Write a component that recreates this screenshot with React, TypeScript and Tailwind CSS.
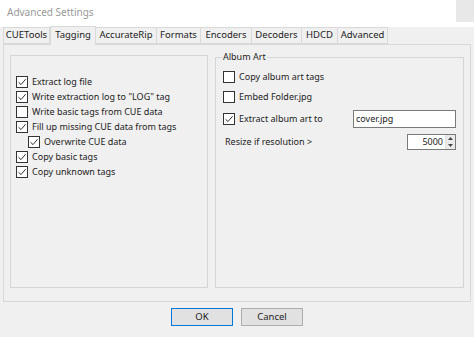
import { ReactNode } from 'react';

const tabs = ['CUETools', 'Tagging', 'AccurateRip', 'Formats', 'Encoders', 'Decoders', 'HDCD', 'Advanced'];
const tabWidths: Record<string, string> = {
  CUETools: 'w-[47px]',
  Tagging: 'w-[46px]',
  AccurateRip: 'w-[61px]',
  Formats: 'w-[44px]',
  Encoders: 'w-[51px]',
  Decoders: 'w-[50px]',
  HDCD: 'w-[36px]',
  Advanced: 'w-[50px]',
};

function CheckBox({ checked }: { checked: boolean }) {
  return (
    <span className="w-[12px] h-[12px] border border-[#333] bg-white flex items-center justify-center shrink-0">
      {checked && (
        <svg width="10" height="10" viewBox="0 0 10 10">
          <path d="M1.5 5.2 L4 7.6 L8.6 2.2" fill="none" stroke="#333" strokeWidth="1" />
        </svg>
      )}
    </span>
  );
}

function Check({ checked, label, indent }: { checked: boolean; label: ReactNode; indent?: boolean }) {
  return (
    <div className={`h-[15px] flex items-center gap-[4px] ${indent ? 'pl-[12px]' : ''}`}>
      <CheckBox checked={checked} />
      <span>{label}</span>
    </div>
  );
}

export default function App() {
  return (
    <div className="w-[474px] h-[337px] bg-[#f0f0f0] text-[9px] text-[#222] flex flex-col overflow-hidden" style={{ fontFamily: '"Noto Sans", "Open Sans", sans-serif' }}>
      {/* title bar */}
      <div className="h-[27px] bg-white flex items-start justify-between shrink-0">
        <span className="pl-[7px] pt-[5px] text-[10px] text-[#999]">Advanced Settings</span>
        <span className="w-[18px] h-[22px] bg-[#e8e8e8]" />
      </div>

      {/* tab strip */}
      <div className="h-[17px] flex items-end pl-[3px] shrink-0 relative z-10 text-[9.5px]">
        {tabs.map((t) =>
          t === 'Tagging' ? (
            <div key={t} className={`${tabWidths[t]} h-[19px] -mb-[1px] bg-[#f0f0f0] border border-b-0 border-[#d9d9d9] flex items-start justify-center pt-[1px]`}>
              {t}
            </div>
          ) : (
            <div key={t} className={`${tabWidths[t]} h-[17px] bg-[#f0f0f0] border border-l-0 first:border-l border-[#d9d9d9] flex items-center justify-center`}>
              {t}
            </div>
          )
        )}
      </div>

      {/* tab page */}
      <div className="mx-[3px] h-[258px] border border-[#d9d9d9] bg-[#f0f0f0] flex gap-[7px] pt-[10px] pl-[6px] shrink-0">
        <div className="w-[198px] h-[233px] border border-[#d5d5d5] pt-[18px] pl-[5px]">
          <Check checked label="Extract log file" />
          <Check checked label={'Write extraction log to "LOG" tag'} />
          <Check checked={false} label="Write basic tags from CUE data" />
          <Check checked label="Fill up missing CUE data from tags" />
          <Check checked indent label="Overwrite CUE data" />
          <Check checked label="Copy basic tags" />
          <Check checked label="Copy unknown tags" />
        </div>

        <div className="w-[249px] h-[231px] mt-[2px] border border-[#d5d5d5] relative pl-[7px] pt-[12px]">
          <span className="absolute -top-[8px] left-[6px] px-[1px] bg-[#f0f0f0]">Album Art</span>
          <div className="flex flex-col gap-[6px]">
            <div className="h-[14px] flex items-center gap-[4px]">
              <CheckBox checked={false} />
              <span>Copy album art tags</span>
            </div>
            <div className="h-[14px] flex items-center gap-[4px]">
              <CheckBox checked={false} />
              <span>Embed Folder.jpg</span>
            </div>
            <div className="h-[18px] flex items-center">
              <div className="w-[130px] flex items-center gap-[4px]">
                <CheckBox checked />
                <span>Extract album art to</span>
              </div>
              <div className="w-[103px] h-[18px] border border-[#7a7a7a] bg-white flex items-center pl-[2px]">cover.jpg</div>
            </div>
            <div className="h-[16px] flex items-center">
              <span className="w-[184px] pl-[2px]">Resize if resolution &gt;</span>
              <div className="w-[49px] h-[16px] border border-[#7a7a7a] bg-white flex">
                <span className="flex-1 text-right pr-[2px] leading-[14px]">5000</span>
                <div className="w-[10px] flex flex-col border-l border-[#e0e0e0]">
                  <div className="flex-1 bg-[#eaeaea] flex items-center justify-center">
                    <svg width="5" height="3" viewBox="0 0 5 3"><path d="M0 3 L2.5 0 L5 3Z" fill="#444" /></svg>
                  </div>
                  <div className="flex-1 bg-[#eaeaea] flex items-center justify-center">
                    <svg width="5" height="3" viewBox="0 0 5 3"><path d="M0 0 L2.5 3 L5 0Z" fill="#444" /></svg>
                  </div>
                </div>
              </div>
            </div>
          </div>
        </div>
      </div>

      {/* buttons */}
      <div className="flex justify-center gap-[8px] pt-[6px] pl-[0px] text-[9.5px]">
        <button className="w-[62px] h-[18px] border border-[#0078d7] bg-[#e1e1e1] flex items-center justify-center">OK</button>
        <button className="w-[62px] h-[18px] border border-[#adadad] bg-[#e1e1e1] flex items-center justify-center">Cancel</button>
      </div>
    </div>
  );
}
